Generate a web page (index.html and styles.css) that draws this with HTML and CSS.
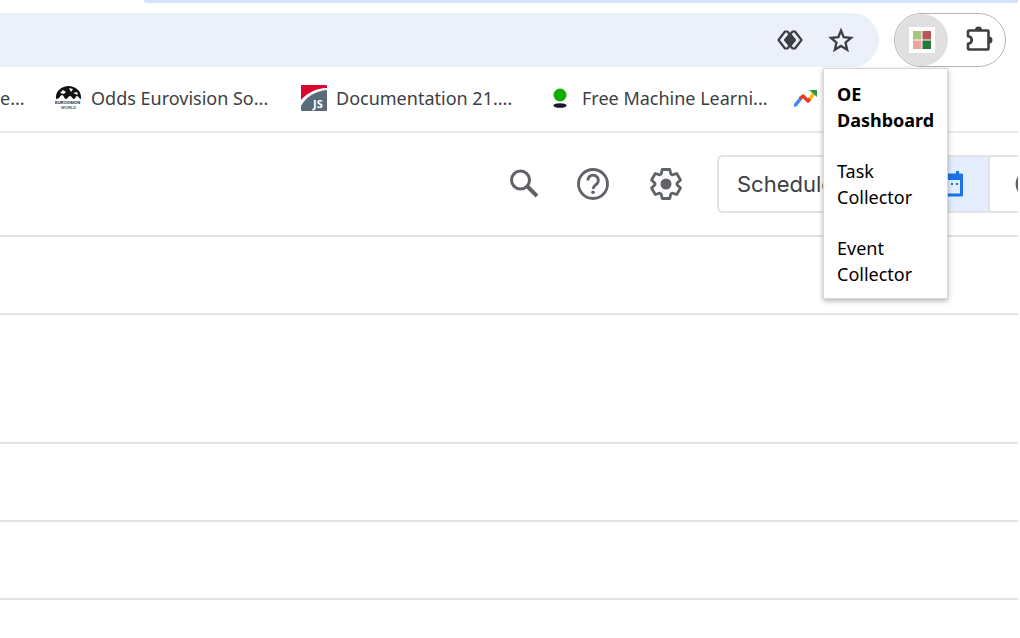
FILE: index.html
```html
<!DOCTYPE html>
<html lang="en">
<head>
    <meta charset="UTF-8">
    <meta name="viewport" content="width=device-width, initial-scale=1.0">
    <title>OE Dashboard</title>
    <link rel="stylesheet" href="styles.css">
</head>
<body>

<div class="tabstrip"></div>

<div class="toolbar">
    <div class="address">
        <button class="icon-button" aria-label="Page code">
            <svg width="28" height="28" viewBox="0 0 28 28" fill="none" stroke="#3c4043" stroke-width="2.200" stroke-linejoin="round">
                <path d="M9 5.500h2.500L18 14l-6.500 8.500H9L2.500 14z"/>
                <path d="M19 5.500h-2.500L10 14l6.500 8.500H19l6.500-8.500z"/>
                <path d="M14 8l5 6-5 6-5-6z" fill="#3c4043"/>
            </svg>
        </button>
        <button class="icon-button" aria-label="Bookmark this page">
            <svg width="28" height="28" viewBox="0 0 28 28" fill="none" stroke="#3c4043" stroke-width="2.300">
                <path d="M14 4.500l2.700 6.700 7.300.6-5.500 4.800 1.700 7.100-6.200-3.800-6.200 3.800 1.700-7.100L4 11.800l7.300-.6z"/>
            </svg>
        </button>
    </div>
    <div class="extensions">
        <button class="extension active" aria-label="OE Dashboard">
            <svg width="26" height="26" viewBox="0 0 26 26">
                <path fill="#fff" d="M0 0h26v26H0z"/>
                <path fill="#a9c47f" d="M4 4h8.500v8.500H4z"/>
                <path fill="#b5555c" d="M13.500 4H22v8.500h-8.500z"/>
                <path fill="#eba3a0" d="M4 13.500h8.500V22H4z"/>
                <path fill="#237a3b" d="M13.500 13.500H22V22h-8.500z"/>
            </svg>
        </button>
        <button class="extension" aria-label="Extensions">
            <svg width="30" height="30" viewBox="0 0 30 30">
                <path d="M5 5.500h18.500q1 0 1 1v17q0 1-1 1H5q-1 0-1-1v-4.800c5-.3 5-7.100 0-7.400V6.500q0-1 1-1z" fill="none" stroke="#3c4043" stroke-width="2.600" stroke-linejoin="round"/>
                <path d="M11 5a3.500 3.500 0 0 1 7 0zM25 11.500a3.500 3.500 0 0 1 0 7z" fill="#3c4043"/>
            </svg>
        </button>
        <div class="popup">
            <strong>OE Dashboard</strong>
            <a href="#task">Task Collector</a>
            <a href="#event">Event Collector</a>
        </div>
    </div>
</div>

<nav class="bookmarks">
    <a class="clipped" href="#">e...</a>
    <a href="#eurovision">
        <svg width="27" height="26" viewBox="0 0 27 26">
            <path d="M1 14C0 6 7 1 13.500 1S27 6 26 14c-2 0-2-3-4-3s-1 3-3 3-2-3-4-3-2 3-4 3-2-4-4-4-2 4-6 4z" fill="#111"/>
            <path d="M5 8l3-3 3 2-2 2zM14 3l4 1-2 3zM18 8l4-1 1 3z" fill="#fff"/>
            <text class="logo-name" x="0" y="19" fill="#111">EUROVISION</text>
            <text class="logo-name" x="6" y="24" fill="#555">WORLD</text>
        </svg>
        Odds Eurovision So...
    </a>
    <a href="#documentation">
        <svg width="26" height="26" viewBox="0 0 26 26">
            <rect width="26" height="26" rx="1" fill="#596b7b"/>
            <path d="M0 0h26v5C14 6 5 12 0 21z" fill="#fff"/>
            <path d="M1 0h24q1 0 1 1v2C15 3 6 8 0 15V1q0-1 1-1z" fill="#d9062f"/>
            <text class="logo-js" x="12" y="23" fill="#fff">JS</text>
        </svg>
        Documentation 21....
    </a>
    <a href="#learning">
        <svg width="26" height="26" viewBox="0 0 26 26">
            <circle cx="13" cy="10" r="6.500" fill="#12ad00"/>
            <ellipse cx="13" cy="20.500" rx="6.500" ry="2.300" fill="#17172e"/>
        </svg>
        Free Machine Learni...
    </a>
    <a href="#trends" aria-label="Trends">
        <svg width="26" height="26" viewBox="0 0 26 26" fill="none" stroke-width="3.500" stroke-linejoin="round">
            <path d="M2.500 20L8 13" stroke="#4285f4" stroke-linecap="round"/>
            <path d="M16 15l4.500-6" stroke="#fbbc04"/>
            <path d="M7 13.500l3-2.500 5 5 2-2" stroke="#ea3b2e"/>
            <path d="M16 5h8v7z" fill="#2b9947"/>
        </svg>
    </a>
</nav>

<header class="app-header">
    <div class="actions">
        <button class="icon-button" aria-label="Search">
            <svg width="32" height="36" viewBox="0 0 32 36" fill="none" stroke="#5f6368" stroke-width="3">
                <circle cx="14.500" cy="14" r="9"/>
                <path d="M21 20l10 10" stroke-width="4"/>
            </svg>
        </button>
        <button class="icon-button" aria-label="Help">
            <svg width="36" height="36" viewBox="0 0 36 36" fill="none" stroke="#5f6368" stroke-width="2.800">
                <circle cx="18" cy="18" r="14.500"/>
                <path d="M12.900 14.500a5.200 5.200 0 1 1 8 4.200c-2 1.500-2.800 2.200-2.800 4.300"/>
                <circle cx="18" cy="26.300" r="1.800" fill="#5f6368" stroke="none"/>
            </svg>
        </button>
        <button class="icon-button" aria-label="Settings">
            <svg width="36" height="36" viewBox="0 0 36 36" fill="none" stroke="#5f6368" stroke-width="2.800" stroke-linejoin="round">
                <path d="M13.200 8l1-4.500h7.600l1 4.500 1.500.8 4.400-1.300 3.800 6.500-3.500 3.200v1.600l3.500 3.200-3.800 6.500-4.400-1.300-1.500.8-1 4.500h-7.600l-1-4.500-1.500-.8-4.400 1.300L3.500 22 7 18.800v-1.600L3.500 14l3.800-6.500 4.400 1.300z"/>
                <circle cx="18" cy="18" r="5.500" fill="#5f6368" stroke="none"/>
            </svg>
        </button>
    </div>
    <div class="view-switch">
        <button class="schedule">Schedule</button>
        <button class="calendar" aria-label="Calendar">
            <svg width="28" height="28" viewBox="0 0 28 28">
                <path d="M3.500 5h20v20h-20z" fill="none" stroke="#1a73e8" stroke-width="3" stroke-linejoin="round"/>
                <path d="M2 4h23v6H2zM6 1h3v4H6zM18 1h3v4h-3zM8 13h2v2H8zM13 13h2v2h-2zM18 13h2v2h-2z" fill="#1a73e8"/>
            </svg>
        </button>
        <button class="tasks" aria-label="Tasks">
            <svg width="28" height="28" viewBox="0 0 28 28" fill="none" stroke="#5f6368" stroke-width="3">
                <circle cx="14" cy="14" r="12"/>
                <path d="M8 14l4 4 8-8"/>
            </svg>
        </button>
    </div>
</header>

<main class="rows">
    <div class="row"></div>
    <div class="row tall"></div>
    <div class="row"></div>
    <div class="row"></div>
</main>

</body>
</html>
```
FILE: styles.css
```css
* {
    box-sizing: border-box;
}
body {
    margin: 0;
    padding-right: 2px;
    background-color: #fff;
    color: #3c4043;
    font-family: "Segoe UI", "Noto Sans", sans-serif;
    font-size: 18px;
    overflow: hidden;
}
button {
    padding: 0;
    border: none;
    background: none;
    color: inherit;
    font: inherit;
    cursor: pointer;
}
a {
    color: inherit;
    text-decoration: none;
}
svg {
    display: block;
    flex: none;
}
.tabstrip {
    height: 3px;
    margin-left: 144px;
    background-color: #d3e3fd;
    border-bottom-left-radius: 8px;
}
.toolbar {
    display: flex;
    gap: 15px;
    height: 54px;
    margin-top: 10px;
    padding-right: 12px;
}
.address {
    display: flex;
    flex: 1;
    align-items: center;
    justify-content: flex-end;
    gap: 23px;
    padding-right: 24px;
    background-color: #ebf0fa;
    border-radius: 0 27px 27px 0;
}
.extensions {
    position: relative;
    display: flex;
    width: 112px;
    border: 1px solid #b4b4b4;
    border-radius: 27px;
}
.extension {
    display: flex;
    flex: 1;
    align-items: center;
    justify-content: center;
    padding-left: 4px;
}
.extension.active {
    flex: none;
    width: 53px;
    padding-left: 0;
    background-color: #e0e0e0;
    border-radius: 50%;
}
/* menu under the extension icon */
.popup {
    position: absolute;
    top: 54px;
    right: 57px;
    z-index: 10;
    display: flex;
    flex-direction: column;
    gap: 25px;
    width: 125px;
    padding: 12px 10px 11px 13px;
    background-color: #fff;
    border: 1px solid #d8d8d8;
    box-shadow: 0 2px 5px rgba(0, 0, 0, 0.3);
    color: #000;
    line-height: 26px;
}
.bookmarks {
    display: flex;
    align-items: center;
    height: 66px;
    padding-bottom: 2px;
    border-bottom: 2px solid #e8e9ea;
    white-space: nowrap;
    overflow: hidden;
}
.bookmarks a {
    display: flex;
    flex: 0 0 246px;
    align-items: center;
    gap: 9px;
}
.bookmarks .clipped {
    flex-basis: 55px;
}
.logo-name {
    font-family: "Liberation Sans", sans-serif;
    font-size: 4px;
    font-weight: bold;
}
.logo-js {
    font-family: "Open Sans", sans-serif;
    font-size: 11px;
    font-weight: bold;
}
.app-header {
    display: flex;
    align-items: center;
    justify-content: flex-end;
    gap: 33px;
    height: 104px;
    border-bottom: 2px solid #e1e3e4;
    overflow: hidden;
}
.actions {
    display: flex;
    gap: 37px;
}
.view-switch {
    display: flex;
    height: 58px;
    border: 2px solid #e1e3e4;
    border-right: none;
    border-radius: 6px 0 0 6px;
}
.schedule {
    width: 200px;
    padding-left: 18px;
    font-family: "Google Sans", Inter, sans-serif;
    font-size: 22px;
    text-align: left;
}
.calendar {
    width: 71px;
    padding-left: 19px;
    background-color: #e3edfd;
    border-right: 2px solid #e1e3e4;
}
.tasks {
    width: 28px;
    padding-left: 25px;
    overflow: hidden;
}
.row {
    height: 78px;
    border-bottom: 2px solid #e1e3e4;
}
.row.tall {
    height: 129px;
}
```
